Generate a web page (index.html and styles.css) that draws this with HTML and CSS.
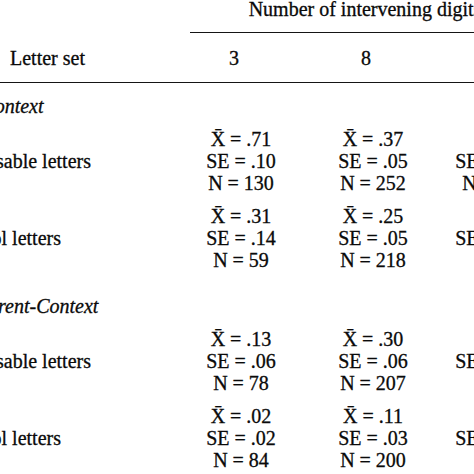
FILE: index.html
```html
<!DOCTYPE html>
<html lang="en">
<head>
<meta charset="utf-8">
<title>Recall by letter set and number of intervening digits</title>
<link rel="stylesheet" href="styles.css">
</head>
<body>
<div class="sheet">
  <div class="table">
    <div class="corner"></div>
    <div class="span-head">Number of intervening digits</div>

    <div class="colhead first">Letter set</div>
    <div class="colhead">3</div>
    <div class="colhead">8</div>
    <div class="colhead">18</div>

    <div class="section">In-Context</div>

    <div class="label">Confusable letters</div>
    <div class="data"><span>X&#x0304; = .71</span><span>SE = .10</span><span>N = 130</span></div>
    <div class="data"><span>X&#x0304; = .37</span><span>SE = .05</span><span>N = 252</span></div>
    <div class="data"><span>&nbsp;</span><span>SE = .04</span><span>N = 96</span></div>

    <div class="label end">Control letters</div>
    <div class="data end"><span>X&#x0304; = .31</span><span>SE = .14</span><span>N = 59</span></div>
    <div class="data end"><span>X&#x0304; = .25</span><span>SE = .05</span><span>N = 218</span></div>
    <div class="data end"><span>&nbsp;</span><span>SE = .03</span><span>&nbsp;</span></div>

    <div class="section">Different-Context</div>

    <div class="label">Confusable letters</div>
    <div class="data"><span>X&#x0304; = .13</span><span>SE = .06</span><span>N = 78</span></div>
    <div class="data"><span>X&#x0304; = .30</span><span>SE = .06</span><span>N = 207</span></div>
    <div class="data"><span>&nbsp;</span><span>SE = .04</span><span>&nbsp;</span></div>

    <div class="label end">Control letters</div>
    <div class="data end"><span>X&#x0304; = .02</span><span>SE = .02</span><span>N = 84</span></div>
    <div class="data end"><span>X&#x0304; = .11</span><span>SE = .03</span><span>N = 200</span></div>
    <div class="data end"><span>&nbsp;</span><span>SE = .02</span><span>&nbsp;</span></div>
  </div>
</div>
</body>
</html>
```

FILE: styles.css
```css
html, body {
  margin: 0;
  padding: 0;
  background: #ffffff;
}

body {
  width: 474px;
  height: 474px;
  overflow: hidden;
  font-family: "Liberation Serif", "DejaVu Serif", serif;
  font-size: 20px;
  color: #0a0a0a;
  -webkit-text-stroke: 0.3px #0a0a0a;
}

.table {
  display: grid;
  grid-template-columns: 222px 132px 132px 102px;
  width: 588px;
  margin-left: -54px;
}

.span-head {
  grid-column: 2 / 5;
  margin-left: 22px;
  padding: 0 0 14px 6px;
  line-height: 18px;
  text-align: center;
  white-space: nowrap;
  border-bottom: 1px solid #151515;
}

.colhead {
  padding: 14px 0 13px;
  line-height: 22px;
  text-align: center;
  border-bottom: 1px solid #151515;
}

.colhead.first {
  text-align: left;
  padding-left: 64px;
}

.section {
  grid-column: 1 / -1;
  padding: 12px 0 0 12px;
  line-height: 22px;
  font-style: italic;
  white-space: nowrap;
}

.label {
  display: flex;
  align-items: center;
  padding-top: 11px;
  line-height: 22px;
  white-space: nowrap;
}

.data {
  display: flex;
  flex-direction: column;
  align-items: center;
  padding: 11px 0 0 14px;
  line-height: 22px;
  white-space: nowrap;
}

.end {
  padding-bottom: 12px;
}
```
